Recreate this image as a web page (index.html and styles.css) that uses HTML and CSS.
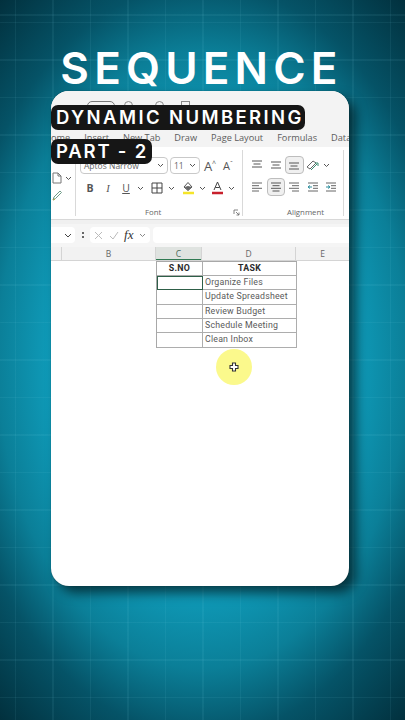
FILE: index.html
```html
<!DOCTYPE html>
<html lang="en">
<head>
<meta charset="utf-8">
<title>Sequence - Dynamic Numbering</title>
<link rel="stylesheet" href="styles.css">
</head>
<body>
<main class="stage">
  <h1 class="title">SEQUENCE</h1>
  <section class="card">
    <div class="titlebar">
      <span class="tb-pill"></span>
      <span class="tb-circle"></span>
      <span class="tb-circle tb-second"></span>
      <span class="tb-square"></span>
    </div>
    <nav class="tabs">
      <span class="tab">ome</span><span class="tab">Insert</span><span class="tab">New Tab</span><span class="tab">Draw</span><span class="tab">Page Layout</span><span class="tab">Formulas</span><span class="tab">Data</span>
    </nav>
    <div class="ribbon">
      <div class="group clip-group">
        <div class="clip-row">
          <svg class="ico" width="10" height="12" viewBox="0 0 10 12"><path d="M1 1h5l3 3v7H1z M6 1v3h3" fill="none" stroke="#777" stroke-width="1"/></svg>
          <svg width="7" height="5" viewBox="0 0 7 5"><path d="M1 1l2.500 2.500L6 1" fill="none" stroke="#555"/></svg>
        </div>
        <div class="clip-row">
          <svg width="10" height="12" viewBox="0 0 10 12"><path d="M1 11l1-3 6-6 1.500 1.500-6 6z" fill="none" stroke="#6f9a87"/><path d="M1 11l2-1" stroke="#b5a040"/></svg>
        </div>
      </div>
      <div class="group font-group">
        <div class="row">
          <div class="select font-name"><span>Aptos Narrow</span><svg width="7" height="5" viewBox="0 0 7 5"><path d="M1 1l2.500 2.500L6 1" fill="none" stroke="#555"/></svg></div>
          <div class="select font-size"><span>11</span><svg width="7" height="5" viewBox="0 0 7 5"><path d="M1 1l2.500 2.500L6 1" fill="none" stroke="#555"/></svg></div>
          <span class="btn big-a">A<sup>^</sup></span>
          <span class="btn small-a">A<sup>ˇ</sup></span>
        </div>
        <div class="row row-two">
          <span class="btn fmt bold">B</span>
          <span class="btn fmt ital">I</span>
          <span class="btn fmt under">U</span>
          <span class="chev"><svg width="7" height="5" viewBox="0 0 7 5"><path d="M1 1l2.500 2.500L6 1" fill="none" stroke="#555"/></svg></span>
          <span class="btn fmt pad-l"><svg width="12" height="12" viewBox="0 0 12 12"><path d="M1 1h10v10H1zM6 1v10M1 6h10" fill="none" stroke="#444"/></svg></span>
          <span class="chev"><svg width="7" height="5" viewBox="0 0 7 5"><path d="M1 1l2.500 2.500L6 1" fill="none" stroke="#555"/></svg></span>
          <span class="btn fmt pad-l"><svg width="13" height="14" viewBox="0 0 13 14"><path d="M6 1.500L2 6l4 3.500L10 6z" fill="none" stroke="#555"/><path d="M6 5l4 1-4 3.500L2.500 6z" fill="#666"/><path d="M1 12h11" stroke="#f5e52a" stroke-width="2.400"/></svg></span>
          <span class="chev"><svg width="7" height="5" viewBox="0 0 7 5"><path d="M1 1l2.500 2.500L6 1" fill="none" stroke="#555"/></svg></span>
          <span class="btn fmt pad-a"><svg width="13" height="14" viewBox="0 0 13 14"><path d="M3 9l3.500-8L10 9M4.300 6.500h4.400" fill="none" stroke="#444"/><path d="M1 12h11" stroke="#c8202c" stroke-width="2.400"/></svg></span>
          <span class="chev"><svg width="7" height="5" viewBox="0 0 7 5"><path d="M1 1l2.500 2.500L6 1" fill="none" stroke="#555"/></svg></span>
        </div>
        <div class="group-label font-label">Font
          <svg class="launcher" width="7" height="7" viewBox="0 0 7 7"><path d="M1 5V1h4M3 3l3 3M6 3.500V6H3.500" fill="none" stroke="#666" stroke-width=".8"/></svg>
        </div>
      </div>
      <div class="group align-group">
        <div class="align-grid">
          <span class="al"><svg width="12" height="10" viewBox="0 0 12 10"><path d="M1 1h10M2.500 4h7M1 7h10" stroke="#555"/></svg></span>
          <span class="al"><svg width="12" height="10" viewBox="0 0 12 10"><path d="M1 2h10M2.500 5h7M1 8h10" stroke="#555"/></svg></span>
          <span class="al active"><svg width="12" height="10" viewBox="0 0 12 10"><path d="M1 3h10M2.500 6h7M1 9h10" stroke="#555"/></svg></span>
          <span class="al"><svg width="13" height="13" viewBox="0 0 13 13"><path d="M1 8l6-6 3 2-6 6z" fill="none" stroke="#666"/><path d="M5 11l6-6" stroke="#3b8d73"/><path d="M9 4h3v3" fill="none" stroke="#3b8d73"/></svg></span>
          <span class="al al-chev"><svg width="7" height="5" viewBox="0 0 7 5"><path d="M1 1l2.500 2.500L6 1" fill="none" stroke="#555"/></svg></span>
          <span class="al"><svg width="12" height="10" viewBox="0 0 12 10"><path d="M1 1h10M1 3.700h7M1 6.300h10M1 9h7" stroke="#666"/></svg></span>
          <span class="al active"><svg width="12" height="10" viewBox="0 0 12 10"><path d="M1 1h10M2.500 3.700h7M1 6.300h10M2.500 9h7" stroke="#555"/></svg></span>
          <span class="al"><svg width="12" height="10" viewBox="0 0 12 10"><path d="M1 1h10M4 3.700h7M1 6.300h10M4 9h7" stroke="#666"/></svg></span>
          <span class="al"><svg width="12" height="10" viewBox="0 0 12 10"><path d="M1 1h10M6 3.700h5M6 6.300h5M1 9h10" stroke="#666"/><path d="M5 5H1M3 3.500L1 5l2 1.500" fill="none" stroke="#2f8f9e"/></svg></span>
          <span class="al"><svg width="12" height="10" viewBox="0 0 12 10"><path d="M1 1h10M6 3.700h5M6 6.300h5M1 9h10" stroke="#666"/><path d="M1 5h4M3 3.500L5 5 3 6.500" fill="none" stroke="#2f8f9e"/></svg></span>
        </div>
        <div class="group-label align-label">Alignment</div>
      </div>
    </div>
    <div class="formula">
      <div class="namebox"><svg width="8" height="5" viewBox="0 0 8 5"><path d="M1 1l3 3 3-3" fill="none" stroke="#444"/></svg></div>
      <span class="dots"></span>
      <div class="fx-box">
        <svg width="9" height="9" viewBox="0 0 9 9"><path d="M1 1l7 7M8 1L1 8" stroke="#bbb"/></svg>
        <svg width="10" height="9" viewBox="0 0 10 9"><path d="M1 5l3 3 5-7" fill="none" stroke="#bbb"/></svg>
        <span class="fx">fx</span>
        <svg width="7" height="5" viewBox="0 0 7 5"><path d="M1 1l2.500 2.500L6 1" fill="none" stroke="#888"/></svg>
      </div>
      <div class="input"></div>
    </div>
    <div class="col-head">
      <span class="gutter"></span>
      <span class="col col-b">B</span>
      <span class="col col-c">C</span>
      <span class="col col-d">D</span>
      <span class="col col-e">E</span>
    </div>
    <div class="sheet">
      <div class="cell head">S.NO</div><div class="cell head">TASK</div>
      <div class="cell selected"></div><div class="cell">Organize Files</div>
      <div class="cell"></div><div class="cell">Update Spreadsheet</div>
      <div class="cell"></div><div class="cell">Review Budget</div>
      <div class="cell"></div><div class="cell">Schedule Meeting</div>
      <div class="cell"></div><div class="cell">Clean Inbox</div>
    </div>
    <div class="cursor">
      <svg width="10" height="10" viewBox="0 0 10 10"><path d="M3.500 1h3v2.500H9v3H6.500V9h-3V6.500H1v-3h2.500z" fill="#fff" stroke="#333" stroke-width="1.100"/></svg>
    </div>
    <div class="badge badge-one">DYNAMIC NUMBERING</div>
    <div class="badge badge-two">PART - 2</div>
  </section>
</main>
</body>
</html>
```
FILE: styles.css
```css
* { box-sizing: border-box; }
html, body { margin: 0; padding: 0; }
body { width: 405px; height: 720px; overflow: hidden; background: #05485c; }

.stage {
  width: 405px;
  height: 720px;
  padding-right: 5px;
  display: flex;
  flex-direction: column;
  align-items: center;
  background:
    repeating-linear-gradient(90deg, rgba(140, 225, 240, .07) 0 1px, transparent 1px 37.500px) 15px 0,
    repeating-linear-gradient(180deg, rgba(140, 225, 240, .07) 0 1px, transparent 1px 37.500px) 0 22px,
    radial-gradient(ellipse 250px 376px at 50% 50%, #12a0be 0%, #0f9cba 60%, #0b7f98 82%, #055367 100%, #012a36 130%);
}

.title {
  margin: 0;
  height: 91px;
  padding: 40px 0 0 3px;
  font-family: "Inter", "Liberation Sans", sans-serif;
  font-size: 44px;
  line-height: 56px;
  font-weight: 600;
  letter-spacing: 5.200px;
  color: #fff;
  white-space: nowrap;
}

.card {
  position: relative;
  width: 298px;
  height: 495px;
  background: #fff;
  border-radius: 18px;
  overflow: hidden;
  font-family: "Open Sans", "Liberation Sans", sans-serif;
  color: #555;
  box-shadow: 7px 7px 12px rgba(0, 0, 0, .6), 0 0 1px rgba(0, 0, 0, .5);
}

.titlebar {
  height: 34px;
  background: #f3f3f3;
  display: flex;
  align-items: flex-start;
  padding: 10px 0 0 36px;
  gap: 9px;
}
.tb-pill { width: 28px; height: 10px; border: 1px solid #777; border-radius: 6px; }
.tb-circle { width: 9px; height: 9px; border: 1px solid #888; border-radius: 50%; }
.tb-second { margin-left: 13px; }
.tb-square { width: 9px; height: 9px; border: 1px solid #888; margin-left: 8px; }

.tabs {
  height: 22px;
  background: #f3f3f3;
  display: flex;
  gap: 14px;
  align-items: center;
  padding-top: 2px;
  font-size: 9.200px;
  white-space: nowrap;
  color: #5c5c5c;
}

.ribbon {
  height: 72px;
  background: #fff;
  display: flex;
  box-shadow: 0 1px 0 #d8d8d8, 0 5px 0 #f0f0f0;
}
.group { position: relative; height: 66px; margin-top: 3px; }
.clip-group { width: 25px; border-right: 1px solid #d9d9d9; padding: 22px 0 0 1px; display: flex; flex-direction: column; gap: 5px; }
.clip-row { display: flex; align-items: center; gap: 3px; }

.font-group { width: 167px; border-right: 1px solid #d9d9d9; padding: 7px 0 0 4px; }
.row { display: flex; align-items: center; height: 17px; }
.row-two { margin-top: 5px; height: 18px; }
.select {
  height: 17px;
  border: 1px solid #c9c9c9;
  border-radius: 4px;
  display: flex;
  align-items: center;
  justify-content: space-between;
  padding: 0 3px 0 3px;
  font-size: 8.500px;
  color: #666;
  background: #fff;
}
.font-name { width: 88px; margin-right: 2px; }
.font-size { width: 30px; margin-right: 1px; }
.btn { display: flex; align-items: center; justify-content: center; width: 18px; height: 17px; color: #555; }
.big-a { font-size: 13px; }
.small-a { font-size: 11px; }
.big-a sup, .small-a sup { font-size: 7px; line-height: 1; margin-top: -5px; }
.fmt { font-size: 10.500px; }
.bold { font-weight: 700; margin-left: 1px; }
.ital { font-style: italic; font-family: "Liberation Serif", serif; }
.under { text-decoration: underline; }
.chev { width: 10px; display: flex; justify-content: center; }
.pad-l { margin-left: 3px; }
.pad-a { margin-left: 1px; }

.group-label { position: absolute; top: 57px; font-size: 7.800px; line-height: 11px; color: #666; }
.font-label { left: 0; right: 0; padding-left: 69px; }
.launcher { position: absolute; right: 2px; top: 2px; }

.align-group { width: 101px; border-right: 1px solid #d9d9d9; padding: 6px 0 0 5px; }
.align-grid { display: grid; grid-template-columns: repeat(5, 18.500px); grid-auto-rows: 18px; row-gap: 4px; }
.al { display: flex; align-items: center; justify-content: center; border-radius: 4px; }
.al-chev { justify-content: flex-start; padding-left: 1px; }
.al.active { background: #f0f0f0; border: 1px solid #bdbdbd; }
.align-label { left: 44px; }

.formula {
  height: 23px;
  background: #f5f5f5;
  margin-top: 5px;
  padding-top: 3px;
  display: flex;
  align-items: flex-start;
}
.namebox {
  width: 24px;
  height: 16px;
  background: #fff;
  border-radius: 0 4px 4px 0;
  display: flex;
  align-items: center;
  justify-content: flex-end;
  padding-right: 3px;
}
.dots { width: 2px; height: 9px; margin: 4px 6px 0 7px; background: radial-gradient(circle, #666 0 1px, transparent 1px) 0 0 / 2px 4px; }
.fx-box {
  width: 60px;
  height: 16px;
  background: #fff;
  border-radius: 4px;
  display: flex;
  align-items: center;
  justify-content: space-between;
  padding: 0 4px;
}
.fx { font-family: "Liberation Serif", serif; font-style: italic; font-size: 13px; color: #333; }
.input { flex: 1; height: 16px; margin-left: 3px; background: #fff; border-radius: 4px 0 0 4px; }

.col-head {
  height: 13.500px;
  display: flex;
  background: #f2f2f2;
  border-bottom: 1px solid #d4d4d4;
  font-size: 8.500px;
  color: #666;
}
.gutter { width: 11px; border-right: 1px solid #d4d4d4; }
.col { display: flex; align-items: center; justify-content: center; border-right: 1px solid #d4d4d4; }
.col-b { width: 94px; }
.col-c { width: 46px; background: #dfe3e0; color: #4a6b58; box-shadow: inset 0 -1px 0 #2f7a52; }
.col-d { width: 94px; }
.col-e { flex: 1; border-right: 0; }

.sheet {
  width: 141px;
  margin-left: 105px;
  display: grid;
  grid-template-columns: 46px 94px;
  grid-auto-rows: 14.400px;
  border-top: 1px solid #a8a8a8;
  border-left: 1px solid #a8a8a8;
  font-family: "Roboto", "Open Sans", sans-serif;
  font-size: 8.800px;
  letter-spacing: .2px;
  color: #5a5a5a;
}
.cell {
  border-right: 1px solid #adadad;
  border-bottom: 1px solid #adadad;
  padding-left: 2px;
  line-height: 13.500px;
  white-space: nowrap;
}
.head { font-weight: 700; text-align: center; color: #2a2a2a; letter-spacing: .3px; padding-left: 0; }
.selected { outline: 1px solid #2e5f48; outline-offset: -1px; border-color: #2e5f48; }

.cursor {
  position: absolute;
  left: 165px;
  top: 258px;
  width: 36px;
  height: 36px;
  border-radius: 50%;
  background: #fbf98c;
  display: flex;
  align-items: center;
  justify-content: center;
}

.badge {
  position: absolute;
  left: 0;
  height: 25px;
  background: #161616;
  border-radius: 7px;
  color: #fff;
  font-family: "Inter", "Liberation Sans", sans-serif;
  font-size: 18.500px;
  font-weight: 600;
  line-height: 25px;
  padding-left: 5px;
  white-space: nowrap;
}
.badge-one { top: 14px; width: 254px; letter-spacing: 2.400px; }
.badge-two { top: 48px; width: 101px; letter-spacing: 1.800px; }
```
